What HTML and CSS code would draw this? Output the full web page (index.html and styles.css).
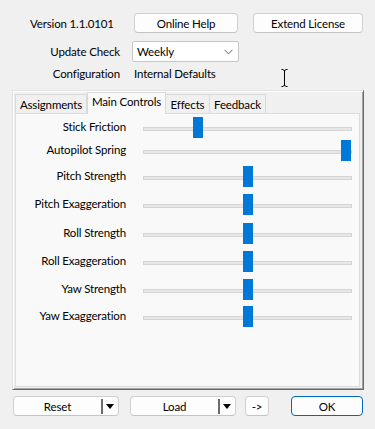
FILE: index.html
```html
<!DOCTYPE html>
<html>
<head>
<meta charset="utf-8">
<link rel="stylesheet" href="styles.css">
</head>
<body>
<div class="window">
  <div class="top-row">
    <span class="version">Version 1.1.0101</span>
    <button class="btn btn-help">Online Help</button>
    <button class="btn btn-license">Extend License</button>
  </div>
  <div class="field-row">
    <span class="field-label">Update Check</span>
    <div class="combo">
      <span>Weekly</span>
      <svg class="chevron" width="9" height="6" viewBox="0 0 9 6"><path d="M0.5 0.8 L4.5 4.8 L8.5 0.8" fill="none" stroke="#5f5f5f" stroke-width="1"/></svg>
    </div>
  </div>
  <div class="field-row info-row">
    <span class="field-label">Configuration</span>
    <span class="field-value">Internal Defaults</span>
  </div>

  <div class="frame">
    <div class="tabs">
      <div class="tab tab-assign">Assignments</div>
      <div class="tab tab-main active">Main Controls</div>
      <div class="tab tab-effects">Effects</div>
      <div class="tab tab-feedback">Feedback</div>
    </div>
    <div class="panel">
      <div class="sliders">
        <span class="s-label">Stick Friction</span>
        <div class="slider"><div class="track"></div><div class="thumb" style="left: calc((100% - 10px) * 0.25)"></div></div>
        <span class="s-label">Autopilot Spring</span>
        <div class="slider"><div class="track"></div><div class="thumb" style="left: calc((100% - 10px) * 0.995)"></div></div>
        <span class="s-label">Pitch Strength</span>
        <div class="slider"><div class="track"></div><div class="thumb" style="left: calc((100% - 10px) * 0.5)"></div></div>
        <span class="s-label">Pitch Exaggeration</span>
        <div class="slider"><div class="track"></div><div class="thumb" style="left: calc((100% - 10px) * 0.5)"></div></div>
        <span class="s-label">Roll Strength</span>
        <div class="slider"><div class="track"></div><div class="thumb" style="left: calc((100% - 10px) * 0.5)"></div></div>
        <span class="s-label">Roll Exaggeration</span>
        <div class="slider"><div class="track"></div><div class="thumb" style="left: calc((100% - 10px) * 0.5)"></div></div>
        <span class="s-label">Yaw Strength</span>
        <div class="slider"><div class="track"></div><div class="thumb" style="left: calc((100% - 10px) * 0.5)"></div></div>
        <span class="s-label">Yaw Exaggeration</span>
        <div class="slider"><div class="track"></div><div class="thumb" style="left: calc((100% - 10px) * 0.5)"></div></div>
      </div>
    </div>
  </div>

  <div class="bottom-row">
    <button class="btn split">
      <span class="split-text">Reset</span>
      <span class="split-divider"></span>
      <span class="split-arrow"></span>
    </button>
    <button class="btn split split-load">
      <span class="split-text">Load</span>
      <span class="split-divider"></span>
      <span class="split-arrow"></span>
    </button>
    <button class="btn btn-arrow">-&gt;</button>
    <button class="btn btn-ok">OK</button>
  </div>

  <svg class="cursor" width="7" height="18" viewBox="0 0 7 18">
    <path d="M0.5 0.5 H2.5 M4.5 0.5 H6.5 M2.5 1.5 H4.5 M3.5 1.5 V16.5 M2.5 16.5 H4.5 M0.5 17.5 H2.5 M4.5 17.5 H6.5" fill="none" stroke="#000" stroke-width="1"/>
  </svg>
</div>
</body>
</html>
```

FILE: styles.css
```css
* { box-sizing: border-box; }

html, body {
  margin: 0;
  padding: 0;
  background: #f0f0f0;
}

body {
  font-family: Lato, "Noto Sans", sans-serif;
  font-size: 11.5px;
  letter-spacing: -0.15px;
  color: #000;
}

.window {
  position: relative;
  width: 375px;
  height: 429px;
  overflow: hidden;
  padding-top: 13px;
}

.btn {
  font-family: inherit;
  font-size: 11.5px;
  letter-spacing: -0.15px;
  color: #000;
  background: #fdfdfd;
  border: 1px solid #d0d0d0;
  border-bottom-color: #c4c4c4;
  border-radius: 4px;
  height: 20px;
  padding: 0;
  margin: 0;
  line-height: 17px;
  text-align: center;
}

.top-row {
  display: flex;
  align-items: center;
  height: 20px;
  padding-left: 30px;
}

.version {
  width: 104px;
  white-space: nowrap;
}

.btn-help { width: 104px; }
.btn-license { width: 110px; margin-left: 15px; }

.field-row {
  display: flex;
  align-items: center;
  margin-top: 8px;
  height: 21px;
}

.field-label {
  width: 120px;
  text-align: right;
  white-space: nowrap;
}

.combo {
  margin-left: 12px;
  width: 107px;
  height: 21px;
  background: #fff;
  border: 1px solid #c6c6c6;
  border-radius: 2px;
  display: flex;
  align-items: center;
  justify-content: space-between;
  padding: 0 5px 0 4px;
}

.chevron { display: block; margin-top: 1px; }

.info-row {
  margin-top: 2px;
  height: 18px;
}

.info-row .field-value {
  margin-left: 14px;
}

.frame {
  margin-top: 8px;
  margin-left: 12px;
  width: 352px;
  height: 300px;
  border: 1px solid;
  border-color: #e2e2e2 #6a6a6a #6a6a6a #e2e2e2;
  box-shadow: inset 1px 1px #ffffff, inset -1px -1px #a3a3a3;
  padding: 1px 3px 2px 2px;
  display: flex;
  flex-direction: column;
}

.tabs {
  display: flex;
  align-items: flex-end;
  height: 21px;
  position: relative;
  z-index: 1;
}

.tab {
  height: 19px;
  line-height: 19px;
  padding: 0;
  text-align: center;
  background: #f0f0f0;
  border: 1px solid #d9d9d9;
  border-bottom: none;
  white-space: nowrap;
}

.tab + .tab { border-left: none; }

.tab-assign { width: 72px; }
.tab-main { width: 79px; }
.tab-effects { width: 44px; }
.tab-feedback { width: 56px; }

.tab.active {
  height: 22px;
  margin-bottom: -1px;
  background: #f9f9f9;
  border-left: 1px solid #d9d9d9;
  line-height: 18px;
}

.tab.active + .tab { border-left: none; }

.panel {
  flex: 1;
  background: #f9f9f9;
  border: 1px solid #dcdcdc;
  padding: 3px 0 0 0;
}

.sliders {
  display: grid;
  grid-template-columns: 110px 209px;
  grid-template-rows: 23px 26px 28px 29px 28px 28px 27px 21px;
  column-gap: 17px;
  align-items: start;
}

.s-label {
  height: 21px;
  line-height: 19px;
  text-align: right;
  white-space: nowrap;
}

.slider {
  position: relative;
  height: 21px;
}

.track {
  margin-top: 10px;
  height: 4px;
  background: #e7e7e7;
  border: 1px solid #d5d5d5;
}

.thumb {
  position: absolute;
  top: 0;
  width: 10px;
  height: 21px;
  background: #0078d7;
}

.bottom-row {
  display: flex;
  margin-top: 6px;
  padding-left: 13px;
  height: 20px;
}

.split {
  width: 106px;
  display: flex;
  align-items: center;
  position: relative;
}

.split-load { margin-left: 11px; }

.split-text {
  flex: 1;
  text-align: center;
}

.split-divider {
  width: 2px;
  height: 15px;
  background: #6b6b6b;
}

.split-arrow {
  width: 0;
  height: 0;
  margin: 0 4px 0 3px;
  border-left: 4px solid transparent;
  border-right: 4px solid transparent;
  border-top: 5px solid #000;
}

.btn-arrow {
  width: 24px;
  margin-left: 9px;
}

.btn-ok {
  width: 72px;
  margin-left: 22px;
  border: 1px solid #0067c0;
}

.cursor {
  position: absolute;
  left: 281px;
  top: 69px;
}
```
